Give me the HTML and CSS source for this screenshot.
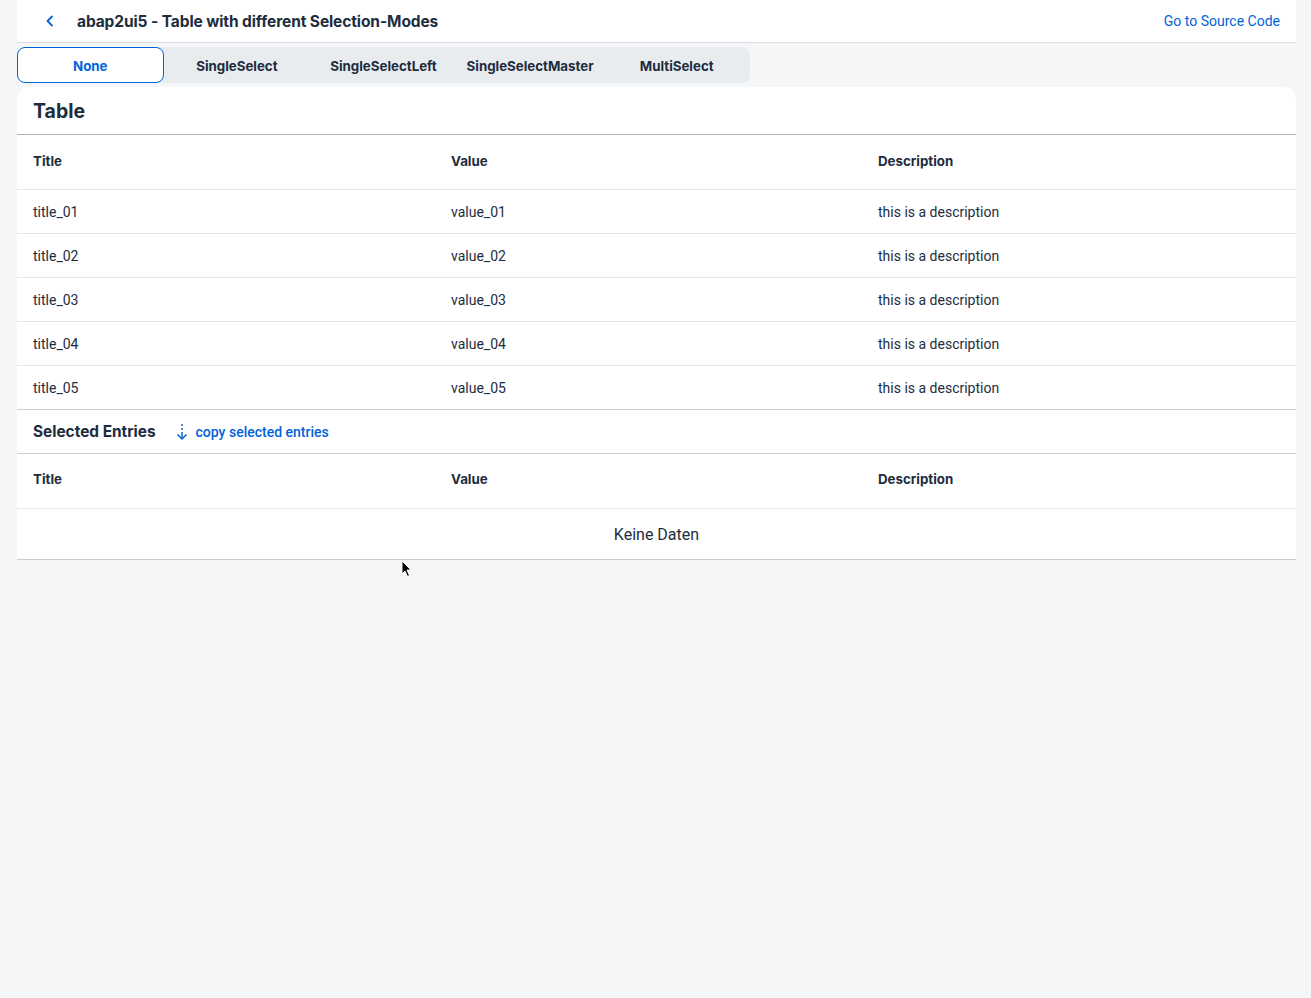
FILE: index.html
```html
<!DOCTYPE html>
<html>
<head>
<meta charset="utf-8">
<link rel="stylesheet" href="styles.css">
</head>
<body>
<div class="page">
  <header class="shellbar">
    <div class="left">
      <span class="back">
        <svg width="10" height="12" viewBox="0 0 10 12"><path d="M7 1.5 L2.5 6 L7 10.5" fill="none" stroke="#0064d9" stroke-width="1.8" stroke-linecap="round" stroke-linejoin="round"/></svg>
      </span>
      <span class="apptitle">abap2ui5 - Table with different Selection-Modes</span>
    </div>
    <a class="srclink">Go to Source Code</a>
  </header>

  <div class="segmented">
    <div class="seg active">None</div>
    <div class="seg">SingleSelect</div>
    <div class="seg">SingleSelectLeft</div>
    <div class="seg">SingleSelectMaster</div>
    <div class="seg">MultiSelect</div>
  </div>

  <section class="card">
    <div class="cardhead">Table</div>
    <div class="tbl">
      <div class="row head"><div>Title</div><div>Value</div><div>Description</div></div>
      <div class="row"><div>title_01</div><div>value_01</div><div>this is a description</div></div>
      <div class="row"><div>title_02</div><div>value_02</div><div>this is a description</div></div>
      <div class="row"><div>title_03</div><div>value_03</div><div>this is a description</div></div>
      <div class="row"><div>title_04</div><div>value_04</div><div>this is a description</div></div>
      <div class="row last"><div>title_05</div><div>value_05</div><div>this is a description</div></div>
    </div>
    <div class="toolbar">
      <span class="tbtitle">Selected Entries</span>
      <a class="tblink">
        <svg width="12" height="18" viewBox="0 0 12 18"><path d="M6 1 V3 M6 5 V7 M6 9 V15.5" fill="none" stroke="#0064d9" stroke-width="1.4"/><path d="M1.5 11.5 L6 16 L10.5 11.5" fill="none" stroke="#0064d9" stroke-width="1.5" stroke-linejoin="round"/></svg>
        copy selected entries
      </a>
    </div>
    <div class="tbl">
      <div class="row head head2"><div>Title</div><div>Value</div><div>Description</div></div>
      <div class="nodata">Keine Daten</div>
    </div>
  </section>
  <svg class="cursor" width="12" height="18" viewBox="0 0 12 18"><path d="M1 1 L1 14 L4 11 L6.5 16.5 L8.5 15.5 L6 10 L10 10 Z" fill="#000" stroke="#fff" stroke-width="1"/></svg>
</div>
</body>
</html>
```

FILE: styles.css
```css
html, body {
  margin: 0;
  padding: 0;
  background: #f5f6f7;
  height: 100%;
}
body {
  font-family: Roboto, "Noto Sans", Arial, sans-serif;
  color: #1d2d3e;
}
.page {
  position: relative;
  padding: 0 15px 0 17px;
  min-height: 998px;
  box-sizing: border-box;
}
.shellbar {
  height: 42px;
  background: #fff;
  border-bottom: 1px solid #d9dde2;
  display: flex;
  align-items: center;
  justify-content: space-between;
  padding: 0 16px 0 28px;
}
.left {
  display: flex;
  align-items: center;
}
.back {
  display: flex;
  width: 12px;
  margin-right: 20px;
}
.apptitle {
  font-family: Inter, Roboto, sans-serif;
  font-weight: 700;
  font-size: 15.5px;
  letter-spacing: -0.1px;
}
.srclink {
  color: #0064d9;
  font-size: 14px;
}
.segmented {
  margin-top: 4px;
  width: 733px;
  height: 36px;
  background: #e9ecef;
  border-radius: 8px;
  display: grid;
  grid-template-columns: repeat(5, 1fr);
}
.seg {
  display: flex;
  align-items: center;
  justify-content: center;
  padding-top: 1px;
  font-family: Inter, Roboto, sans-serif;
  font-size: 13.3px;
  font-weight: 700;
  color: #1d2d3e;
  border-radius: 8px;
  box-sizing: border-box;
}
.seg.active {
  background: #fff;
  border: 1px solid #0064d9;
  color: #0064d9;
}
.card {
  margin-top: 4px;
  background: #fff;
  border-radius: 12px 12px 0 0;
}
.cardhead {
  height: 47px;
  display: flex;
  align-items: center;
  padding-left: 16px;
  font-family: Inter, Roboto, sans-serif;
  font-size: 19.5px;
  font-weight: 700;
  border-bottom: 1px solid #a9b4be;
}
.row {
  display: grid;
  grid-template-columns: 418px 427px 1fr;
  height: 43px;
  border-bottom: 1px solid #e5e5e5;
  font-size: 14px;
  align-items: center;
}
.row > div {
  padding-left: 16px;
  padding-top: 1px;
}
.row.head {
  height: 54px;
  font-family: Inter, Roboto, sans-serif;
  font-size: 13.3px;
  font-weight: 700;
}
.row.head > div {
  padding-top: 0;
  padding-bottom: 2px;
}
.row.head2 > div {
  padding-bottom: 4px;
}
.row.last {
  border-bottom: 1px solid #c9cfd4;
}
.toolbar {
  height: 43px;
  display: flex;
  align-items: center;
  padding-left: 16px;
  border-bottom: 1px solid #c9cfd4;
}
.tbtitle {
  font-family: Inter, Roboto, sans-serif;
  font-size: 15.4px;
  font-weight: 700;
  margin-right: 20px;
}
.tblink {
  display: flex;
  align-items: center;
  gap: 8px;
  color: #0064d9;
  font-size: 14px;
  font-weight: 500;
}
.nodata {
  height: 50px;
  display: flex;
  align-items: center;
  justify-content: center;
  font-size: 16px;
  border-bottom: 1px solid #c9cfd4;
}
.cursor {
  position: absolute;
  left: 401px;
  top: 560px;
}
```
